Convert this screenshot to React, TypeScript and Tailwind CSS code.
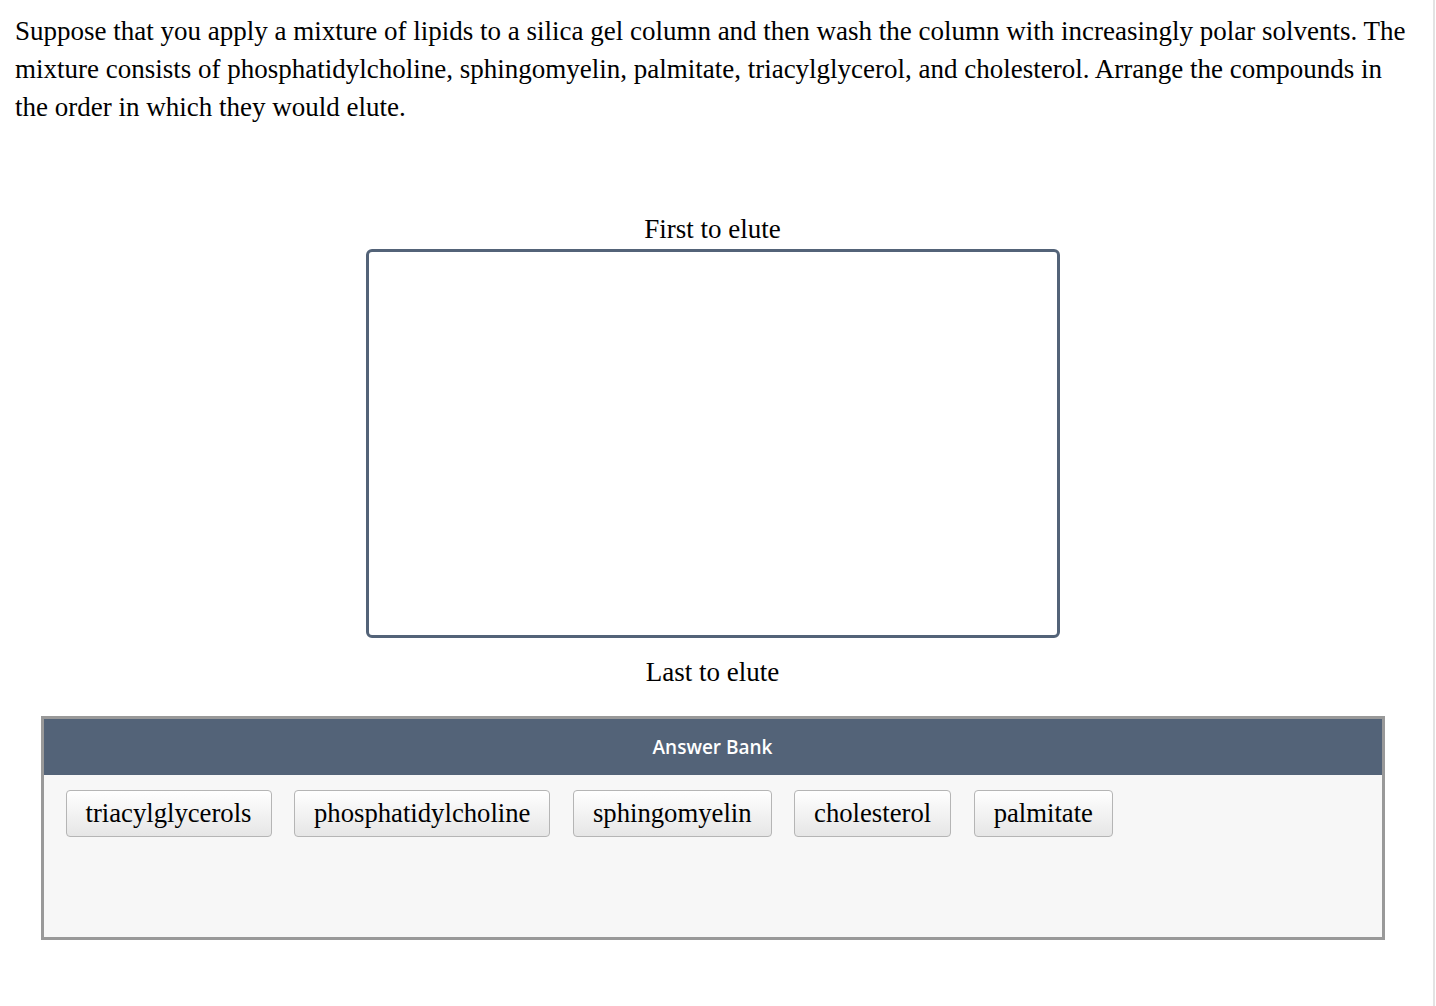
const compounds = [
  "triacylglycerols",
  "phosphatidylcholine",
  "sphingomyelin",
  "cholesterol",
  "palmitate",
];

const serif = { fontFamily: '"Liberation Serif", "Times New Roman", serif' };

export default function App() {
  return (
    <div className="min-h-[1006px] w-[1436px] bg-white">
      <div className="min-h-[1006px] w-[1435px] border-r-2 border-[#e3e3e3]">
        <div className="w-[1425px] pl-[15px] pt-[12px]">
          <p className="w-[1395px] text-[27px] leading-[38px] text-black" style={serif}>
            Suppose that you apply a mixture of lipids to a silica gel column and then wash the column
            with increasingly polar solvents. The mixture consists of phosphatidylcholine, sphingomyelin,
            palmitate, triacylglycerol, and cholesterol. Arrange the compounds in the order in which they
            would elute.
          </p>
        </div>

        <div className="flex w-[1425px] flex-col items-center">
          <div className="mt-[89px] text-[27px] leading-[28px] text-black" style={serif}>
            First to elute
          </div>
          <div className="mt-[6px] h-[389px] w-[694px] rounded-[6px] border-[3px] border-[#536378] bg-white" />
          <div className="mt-[20px] text-[27px] leading-[28px] text-black" style={serif}>
            Last to elute
          </div>

          <div className="mt-[30px] w-[1344px] border-[3px] border-[#999999]">
            <div
              className="flex h-[56px] items-center justify-center bg-[#536378] text-[19px] font-semibold text-white"
              style={{ fontFamily: '"Open Sans", Roboto, sans-serif' }}
            >
              Answer Bank
            </div>
            <div className="flex h-[162px] items-start gap-[22.5px] bg-[#f7f7f7] pl-[22px] pt-[15px]">
              {compounds.map((c) => (
                <div
                  key={c}
                  className="flex h-[47px] items-center rounded-[4px] border border-[#b5b5b5] bg-gradient-to-b from-white to-[#e6e6e6] px-[19px] text-[26.7px] text-black"
                  style={serif}
                >
                  {c}
                </div>
              ))}
            </div>
          </div>
        </div>
      </div>
    </div>
  );
}
